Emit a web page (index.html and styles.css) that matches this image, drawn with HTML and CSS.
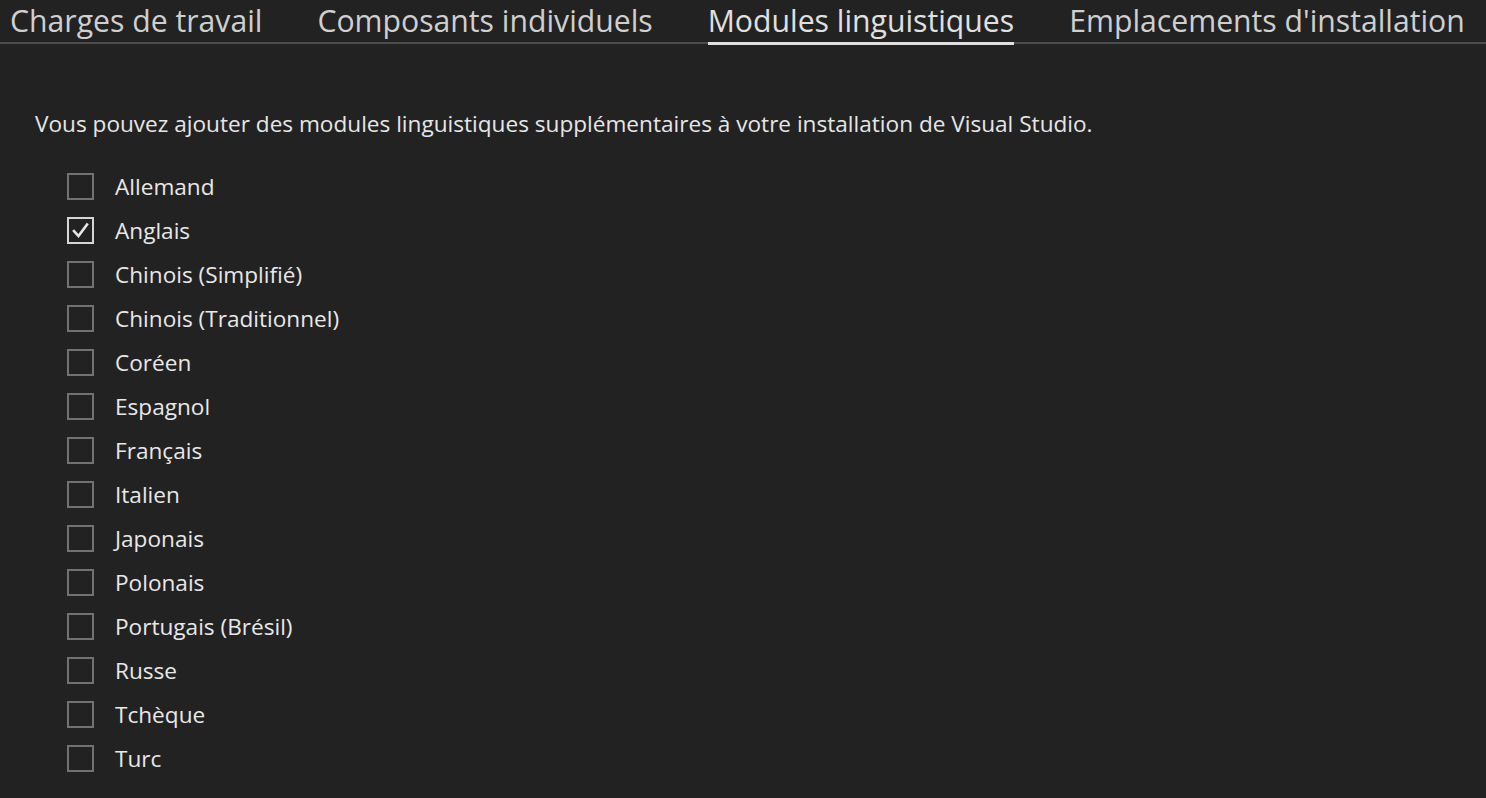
FILE: index.html
```html
<!DOCTYPE html>
<html lang="fr">
<head>
<meta charset="utf-8">
<title>Modules linguistiques</title>
<link rel="stylesheet" href="styles.css">
</head>
<body>
<nav class="tabs">
  <div class="tab">Charges de travail</div>
  <div class="tab">Composants individuels</div>
  <div class="tab active">Modules linguistiques</div>
  <div class="tab">Emplacements d'installation</div>
</nav>
<main class="content">
  <p class="intro">Vous pouvez ajouter des modules linguistiques supplémentaires à votre installation de Visual Studio.</p>
  <ul class="langs">
    <li class="lang"><span class="box"></span><span class="label">Allemand</span></li>
    <li class="lang"><span class="box checked"><svg viewBox="0 0 23 23" width="23" height="23"><path d="M5 12 L9.5 17 L18 5.5" fill="none" stroke="#e8e8e8" stroke-width="2.6" stroke-linecap="square"/></svg></span><span class="label">Anglais</span></li>
    <li class="lang"><span class="box"></span><span class="label">Chinois (Simplifié)</span></li>
    <li class="lang"><span class="box"></span><span class="label">Chinois (Traditionnel)</span></li>
    <li class="lang"><span class="box"></span><span class="label">Coréen</span></li>
    <li class="lang"><span class="box"></span><span class="label">Espagnol</span></li>
    <li class="lang"><span class="box"></span><span class="label">Français</span></li>
    <li class="lang"><span class="box"></span><span class="label">Italien</span></li>
    <li class="lang"><span class="box"></span><span class="label">Japonais</span></li>
    <li class="lang"><span class="box"></span><span class="label">Polonais</span></li>
    <li class="lang"><span class="box"></span><span class="label">Portugais (Brésil)</span></li>
    <li class="lang"><span class="box"></span><span class="label">Russe</span></li>
    <li class="lang"><span class="box"></span><span class="label">Tchèque</span></li>
    <li class="lang"><span class="box"></span><span class="label">Turc</span></li>
  </ul>
</main>
</body>
</html>
```
FILE: styles.css
```css
html, body {
  margin: 0;
  padding: 0;
  background: #222222;
  height: 100%;
  overflow: hidden;
}
body {
  font-family: "Open Sans", "Noto Sans", sans-serif;
  color: #e2e2e2;
}
.tabs {
  display: flex;
  gap: 55px;
  padding-left: 10px;
  height: 44px;
  border-bottom: 2px solid #4c4c4c;
  box-sizing: border-box;
}
.tab {
  font-size: 30.2px;
  line-height: 42px;
  color: #cfcfcf;
  white-space: nowrap;
  border-bottom: 3px solid transparent;
  margin-bottom: -3px;
  height: 42px;
  box-sizing: content-box;
}
.tab.active {
  border-bottom-color: #e0e0e0;
  color: #e0e0e0;
}
.content {
  padding: 0 0 0 35px;
}
.intro {
  margin: 64px 0 0 0;
  font-size: 22.6px;
  line-height: 32px;
  color: #e6e6e6;
}
.langs {
  list-style: none;
  margin: 24px 0 0 32px;
  padding: 0;
}
.lang {
  display: flex;
  align-items: center;
  height: 44px;
  gap: 21px;
}
.box {
  width: 23px;
  height: 23px;
  border: 2px solid #727272;
  display: flex;
  align-items: center;
  justify-content: center;
}
.box.checked {
  border-color: #d6d6d6;
}
.label {
  font-size: 22.6px;
  color: #e8e8e8;
}
```
